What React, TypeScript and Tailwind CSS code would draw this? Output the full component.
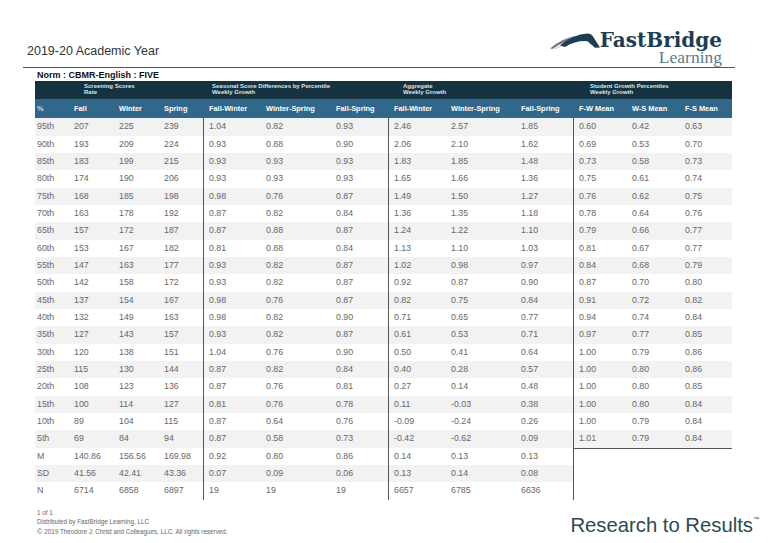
import React from "react";

const grid =
  "grid grid-cols-[35px_45px_45px_43px_59px_70px_56px_59px_70px_56px_55px_53px_51px]";

const headers = [
  "%",
  "Fall",
  "Winter",
  "Spring",
  "Fall-Winter",
  "Winter-Spring",
  "Fall-Spring",
  "Fall-Winter",
  "Winter-Spring",
  "Fall-Spring",
  "F-W Mean",
  "W-S Mean",
  "F-S Mean",
];

const rows: string[][] = [
  ["95th", "207", "225", "239", "1.04", "0.82", "0.93", "2.46", "2.57", "1.85", "0.60", "0.42", "0.63"],
  ["90th", "193", "209", "224", "0.93", "0.88", "0.90", "2.06", "2.10", "1.62", "0.69", "0.53", "0.70"],
  ["85th", "183", "199", "215", "0.93", "0.93", "0.93", "1.83", "1.85", "1.48", "0.73", "0.58", "0.73"],
  ["80th", "174", "190", "206", "0.93", "0.93", "0.93", "1.65", "1.66", "1.36", "0.75", "0.61", "0.74"],
  ["75th", "168", "185", "198", "0.98", "0.76", "0.87", "1.49", "1.50", "1.27", "0.76", "0.62", "0.75"],
  ["70th", "163", "178", "192", "0.87", "0.82", "0.84", "1.36", "1.35", "1.18", "0.78", "0.64", "0.76"],
  ["65th", "157", "172", "187", "0.87", "0.88", "0.87", "1.24", "1.22", "1.10", "0.79", "0.66", "0.77"],
  ["60th", "153", "167", "182", "0.81", "0.88", "0.84", "1.13", "1.10", "1.03", "0.81", "0.67", "0.77"],
  ["55th", "147", "163", "177", "0.93", "0.82", "0.87", "1.02", "0.98", "0.97", "0.84", "0.68", "0.79"],
  ["50th", "142", "158", "172", "0.93", "0.82", "0.87", "0.92", "0.87", "0.90", "0.87", "0.70", "0.80"],
  ["45th", "137", "154", "167", "0.98", "0.76", "0.87", "0.82", "0.75", "0.84", "0.91", "0.72", "0.82"],
  ["40th", "132", "149", "163", "0.98", "0.82", "0.90", "0.71", "0.65", "0.77", "0.94", "0.74", "0.84"],
  ["35th", "127", "143", "157", "0.93", "0.82", "0.87", "0.61", "0.53", "0.71", "0.97", "0.77", "0.85"],
  ["30th", "120", "138", "151", "1.04", "0.76", "0.90", "0.50", "0.41", "0.64", "1.00", "0.79", "0.86"],
  ["25th", "115", "130", "144", "0.87", "0.82", "0.84", "0.40", "0.28", "0.57", "1.00", "0.80", "0.86"],
  ["20th", "108", "123", "136", "0.87", "0.76", "0.81", "0.27", "0.14", "0.48", "1.00", "0.80", "0.85"],
  ["15th", "100", "114", "127", "0.81", "0.76", "0.78", "0.11", "-0.03", "0.38", "1.00", "0.80", "0.84"],
  ["10th", "89", "104", "115", "0.87", "0.64", "0.76", "-0.09", "-0.24", "0.26", "1.00", "0.79", "0.84"],
  ["5th", "69", "84", "94", "0.87", "0.58", "0.73", "-0.42", "-0.62", "0.09", "1.01", "0.79", "0.84"],
  ["M", "140.86", "156.56", "169.98", "0.92", "0.80", "0.86", "0.14", "0.13", "0.13", "", "", ""],
  ["SD", "41.56", "42.41", "43.36", "0.07", "0.09", "0.06", "0.13", "0.14", "0.08", "", "", ""],
  ["N", "6714", "6858", "6897", "19", "19", "19", "6657", "6785", "6636", "", "", ""],
];

const divided = [4, 7, 10];

function cellPad(i: number) {
  if (i === 0) return "pl-[2px]";
  if (divided.includes(i)) return "border-l border-[#555] pl-[5px]";
  return "pl-[4px]";
}

function Logo() {
  return (
    <div className="flex items-start pt-[33px] pr-[46px]">
      <svg width="51" height="16" viewBox="0 0 51 16">
        <path d="M1 15.5 Q12 5.5 26 3 L28.5 5.6 Q15 8 4 15.8 Z" fill="#6b95b4" />
        <path d="M2.5 15.6 Q13.5 6.8 27.5 4.5" stroke="#c0392b" strokeWidth="0.8" fill="none" />
        <path d="M6 15.8 Q17 9.2 29.5 7.6" stroke="#b7c3ca" strokeWidth="0.9" fill="none" />
        <path
          d="M11 12.5 Q24 1.2 38.5 0.4 Q41.5 0.3 43.5 2.8 L51 14.5 L46 14.8 L38.5 8.2 Q27 7.4 16 14 Z"
          fill="#1d3d55"
        />
      </svg>
      <div className="flex flex-col items-end">
        <span className="font-['DejaVu_Serif',serif] text-[20px] leading-[14px] font-bold text-[#1d3d55]">
          FastBridge
        </span>
        <span className="mt-[4px] font-['Liberation_Serif',serif] text-[17.5px] leading-[13px] text-[#5d7d87]">
          Learning
        </span>
      </div>
    </div>
  );
}

export default function App() {
  return (
    <div className="relative h-[543px] w-[768px] overflow-hidden bg-white font-['Liberation_Sans',Arial,sans-serif]">
      <div className="flex h-[67px] justify-between pl-[27px]">
        <div className="pt-[43px] text-[12.5px] leading-[16px] text-[#333]">2019-20 Academic Year</div>
        <Logo />
      </div>
      <div className="ml-[23px] h-px w-[712px] bg-[#555]" />

      <div className="mt-[2px] pl-[37px] text-[9px] leading-[11px] font-bold text-[#111]">
        Norm : CBMR-English : FIVE
      </div>

      <div className="ml-[35px] w-[697px]">
        <div className={`${grid} h-[18px] bg-[#14323f] text-[6px] leading-[5.5px] font-bold text-[#dce6eb]`}>
          <div />
          <div className="col-span-3 pl-[14px] pt-[3px]">
            Screening Scores
            <br />
            Rate
          </div>
          <div className="col-span-3 pl-[9px] pt-[3px]">
            Seasonal Score Differences by Percentile
            <br />
            Weekly Growth
          </div>
          <div className="col-span-3 pl-[15px] pt-[3px]">
            Aggregate
            <br />
            Weekly Growth
          </div>
          <div className="col-span-3 pl-[17px] pt-[3px]">
            Student Growth Percentiles
            <br />
            Weekly Growth
          </div>
        </div>

        <div className={`${grid} h-[19.3px] items-center bg-[#30678a] text-[7.4px] font-bold text-white`}>
          {headers.map((h, i) => (
            <div
              key={i}
              className={i === 0 ? "pl-[2px] text-[#c9d9e3]" : divided.includes(i) ? "pl-[6px]" : "pl-[4px]"}
            >
              {h}
            </div>
          ))}
        </div>

        {rows.map((r, ri) => (
          <div key={ri} className={`${grid} h-[17.33px] text-[8.8px] text-[#676767]`}>
            {r.map((v, ci) => {
              const tail = ri >= 19 && ci >= 10;
              const shade = ri % 2 === 0 && !tail ? "bg-[#f2f2f2]" : "bg-white";
              const top = ri === 19 && ci >= 10 ? "border-t border-t-[#555]" : "";
              return (
                <div key={ci} className={`flex items-center ${cellPad(ci)} ${shade} ${top}`}>
                  {v}
                </div>
              );
            })}
          </div>
        ))}
      </div>

      <div className="mt-[8px] flex justify-between pr-[9px]">
        <div className="pl-[37px] text-[6.3px] leading-[9.5px] text-[#666]">
          <div>1 of 1</div>
          <div>Distributed by FastBridge Learning, LLC</div>
          <div>
            <span className="text-[7.5px]">©</span> 2019 Theodore J. Christ and Colleagues, LLC. All rights reserved.
          </div>
        </div>
        <div className="mt-[5px] flex items-start text-[20.3px] leading-[24px] text-[#2c4a52]">
          Research to Results
          <span className="mt-[3px] text-[6px] leading-[6px]">™</span>
        </div>
      </div>
    </div>
  );
}
